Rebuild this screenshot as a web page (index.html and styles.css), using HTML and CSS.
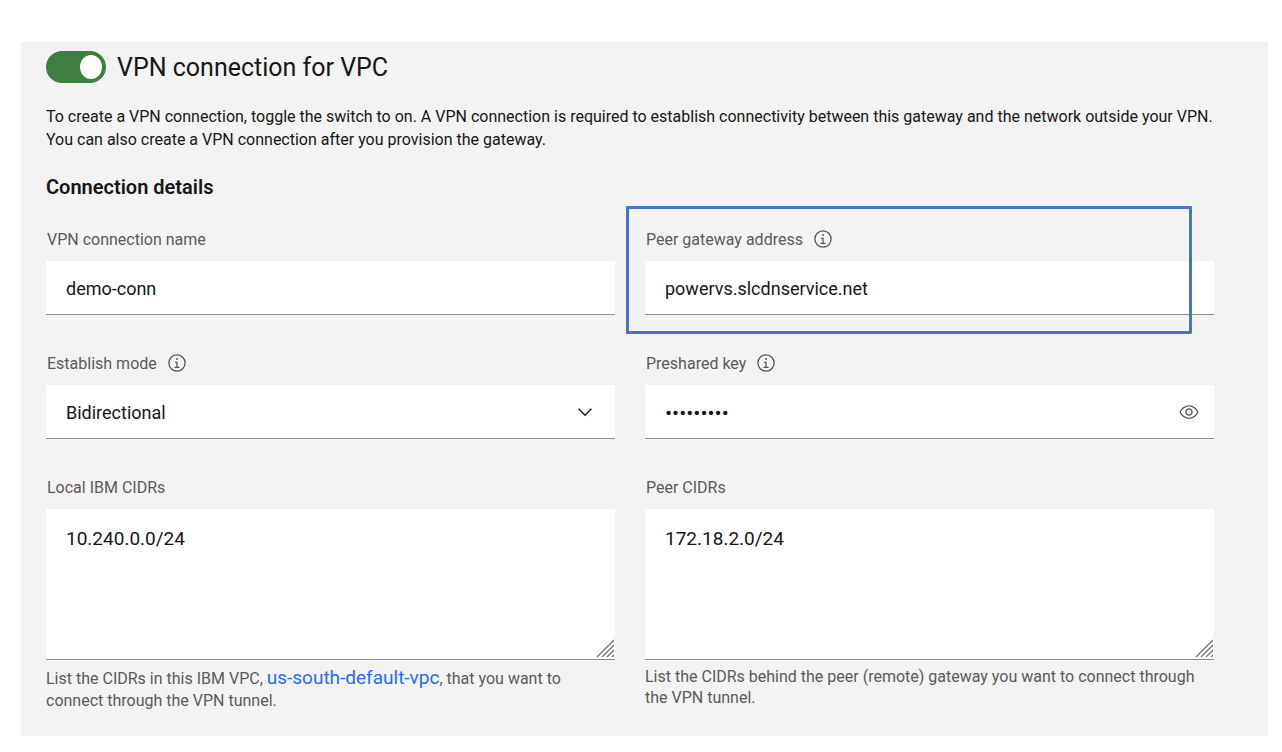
FILE: index.html
```html
<!DOCTYPE html>
<html lang="en">
	<head>
		<meta charset="UTF-8">
		<meta name="viewport" content="width=device-width, initial-scale=1.0">
		<title>VPN connection for VPC</title>
		<link rel="stylesheet" href="styles.css">
	</head>
	<body>
		<form class="panel">
			<div class="panel-header">
				<input type="checkbox" role="switch" id="vpnToggle" class="toggle" checked>
				<h1><label for="vpnToggle">VPN connection for VPC</label></h1>
			</div>

			<p class="description">
				To create a VPN connection, toggle the switch to on. A VPN connection is required to establish connectivity between this gateway and the network outside your VPN.<br>
				You can also create a VPN connection after you provision the gateway.
			</p>

			<h2>Connection details</h2>

			<div class="fields">
				<div class="field">
					<div class="field-label">
						<label for="connName">VPN connection name</label>
					</div>
					<input type="text" id="connName" class="control" value="demo-conn">
				</div>

				<div class="field highlighted">
					<div class="field-label">
						<label for="peerAddress">Peer gateway address</label>
						<button type="button" class="icon-button" aria-label="About peer gateway address">
							<svg class="icon" viewBox="0 0 32 32"><path d="M17 22v-8h-4v2h2v6h-3v2h8v-2zM16 8a1.5 1.5 0 1 0 1.5 1.5A1.5 1.5 0 0 0 16 8z"/><path d="M16 30a14 14 0 1 1 14-14 14 14 0 0 1-14 14zm0-26a12 12 0 1 0 12 12A12 12 0 0 0 16 4z"/></svg>
						</button>
					</div>
					<input type="text" id="peerAddress" class="control" value="powervs.slcdnservice.net">
				</div>

				<div class="field">
					<div class="field-label">
						<label for="mode">Establish mode</label>
						<button type="button" class="icon-button" aria-label="About establish mode">
							<svg class="icon" viewBox="0 0 32 32"><path d="M17 22v-8h-4v2h2v6h-3v2h8v-2zM16 8a1.5 1.5 0 1 0 1.5 1.5A1.5 1.5 0 0 0 16 8z"/><path d="M16 30a14 14 0 1 1 14-14 14 14 0 0 1-14 14zm0-26a12 12 0 1 0 12 12A12 12 0 0 0 16 4z"/></svg>
						</button>
					</div>
					<div class="control-wrap">
						<select id="mode" class="control">
							<option>Bidirectional</option>
							<option>Peer only</option>
						</select>
						<svg class="chevron" viewBox="0 0 16 16"><path d="M8 11L3 6l.7-.7L8 9.6l4.3-4.3.7.7z"/></svg>
					</div>
				</div>

				<div class="field">
					<div class="field-label">
						<label for="psk">Preshared key</label>
						<button type="button" class="icon-button" aria-label="About preshared key">
							<svg class="icon" viewBox="0 0 32 32"><path d="M17 22v-8h-4v2h2v6h-3v2h8v-2zM16 8a1.5 1.5 0 1 0 1.5 1.5A1.5 1.5 0 0 0 16 8z"/><path d="M16 30a14 14 0 1 1 14-14 14 14 0 0 1-14 14zm0-26a12 12 0 1 0 12 12A12 12 0 0 0 16 4z"/></svg>
						</button>
					</div>
					<div class="control-wrap">
						<input type="password" id="psk" class="control" value="demo-pass">
						<button type="button" class="icon-button reveal" aria-label="Show key">
							<svg class="icon" viewBox="0 0 16 16"><path d="M15.500 7.800C14.300 4.700 11.300 2.600 8 2.500 4.700 2.600 1.700 4.700.5 7.800c0 .1 0 .2 0 .3 1.200 3.100 4.100 5.200 7.500 5.300 3.300-.1 6.300-2.200 7.500-5.300 0-.1 0-.2 0-.3zM8 12.500c-2.700 0-5.400-2-6.500-4.500 1-2.500 3.800-4.500 6.500-4.500s5.400 2 6.500 4.500c-1 2.500-3.800 4.500-6.500 4.500z"/><path d="M8 5C6.300 5 5 6.300 5 8s1.300 3 3 3 3-1.300 3-3-1.300-3-3-3zm0 5c-1.100 0-2-.9-2-2s.9-2 2-2 2 .9 2 2-.9 2-2 2z"/></svg>
						</button>
					</div>
				</div>

				<div class="field">
					<div class="field-label">
						<label for="localCidrs">Local IBM CIDRs</label>
					</div>
					<div class="control-wrap">
						<textarea id="localCidrs" class="control">10.240.0.0/24</textarea>
						<svg class="grip" viewBox="0 0 18 18"><path d="M1 18L18 1M6 18L18 6M11 18l7-7M16 18l2-2"/></svg>
					</div>
					<p class="helper">List the CIDRs in this IBM VPC, <a href="#">us-south-default-vpc</a>, that you want to connect through the VPN tunnel.</p>
				</div>

				<div class="field">
					<div class="field-label">
						<label for="peerCidrs">Peer CIDRs</label>
					</div>
					<div class="control-wrap">
						<textarea id="peerCidrs" class="control">172.18.2.0/24</textarea>
						<svg class="grip" viewBox="0 0 18 18"><path d="M1 18L18 1M6 18L18 6M11 18l7-7M16 18l2-2"/></svg>
					</div>
					<p class="helper">List the CIDRs behind the peer (remote) gateway you want to connect through the VPN tunnel.</p>
				</div>
			</div>
		</form>
	</body>
</html>
```

FILE: styles.css
```css
* {
    box-sizing: border-box;
}

body {
    margin: 0;
    padding: 42px 14px 16px 21px;
    background-color: #ffffff;
    color: #161616;
    font-family: "Roboto", "Liberation Sans", sans-serif;
    font-size: 16px;
}

.panel {
    padding: 9px 15px 25px 25px;
    background-color: #f3f3f3;
}

.panel-header {
    display: flex;
    align-items: center;
    gap: 11px;
}

h1,
h2,
p {
    margin: 0;
}

h1 {
    padding-top: 2px;
    font-size: 25px;
    font-weight: 400;
    line-height: 30px;
}

.toggle {
    appearance: none;
    display: flex;
    align-items: center;
    justify-content: flex-end;
    width: 60px;
    height: 32px;
    margin: 0;
    padding: 4px;
    border-radius: 16px;
    background-color: #3e7f41;
    cursor: pointer;
}

.toggle::before {
    content: "";
    width: 22px;
    height: 24px;
    border-radius: 50%;
    background-color: #ffffff;
}

.toggle:not(:checked) {
    justify-content: flex-start;
    background-color: #8d8d8d;
}

.description {
    margin-top: 22px;
    line-height: 23px;
}

h2 {
    margin-top: 24px;
    font-size: 20px;
    font-weight: 600;
    line-height: 24px;
}

.fields {
    display: grid;
    grid-template-columns: 1fr 1fr;
    gap: 38px 30px;
    margin: 30px 39px 0 0;
}

.field {
    position: relative;
}

.field-label {
    display: flex;
    align-items: center;
    gap: 10px;
    height: 20px;
    margin-bottom: 12px;
    padding-left: 1px;
    color: #5a5a5a;
    font-size: 16px;
}

.control-wrap {
    position: relative;
}

.control {
    display: block;
    width: 100%;
    height: 54px;
    padding: 2px 20px 0;
    border: none;
    border-bottom: 1px solid #8d8d8d;
    border-radius: 0;
    background-color: #ffffff;
    color: #161616;
    font-family: inherit;
    font-size: 18px;
    appearance: none;
}

.control:focus {
    outline: 2px solid #0f62fe;
    outline-offset: -2px;
}

input[type="password"] {
    font-size: 21px;
}

textarea.control {
    height: 151px;
    padding: 18px 20px;
    font-size: 19px;
    line-height: 24px;
    resize: none;
}

.icon-button {
    display: flex;
    padding: 0;
    border: none;
    background: none;
    color: #525252;
    cursor: pointer;
}

.icon {
    width: 20px;
    height: 20px;
    fill: currentColor;
}

.reveal {
    position: absolute;
    top: 17px;
    right: 15px;
}

.chevron {
    position: absolute;
    top: 16px;
    right: 19px;
    width: 22px;
    height: 22px;
    fill: #161616;
    pointer-events: none;
}

.grip {
    position: absolute;
    right: 1px;
    bottom: 3px;
    width: 18px;
    height: 18px;
    fill: none;
    stroke: #6f6f6f;
    stroke-width: 1.3;
    pointer-events: none;
}

.helper {
    margin-top: 6px;
    color: #5a5a5a;
    font-size: 16px;
    line-height: 21px;
}

.helper a {
    color: #2a6bf0;
    font-size: 19px;
    line-height: 24px;
    text-decoration: none;
}

.highlighted::after {
    content: "";
    position: absolute;
    inset: -23px 22px -19px -19px;
    border: 3px solid #4a74c0;
    border-radius: 1px;
    pointer-events: none;
}
```
